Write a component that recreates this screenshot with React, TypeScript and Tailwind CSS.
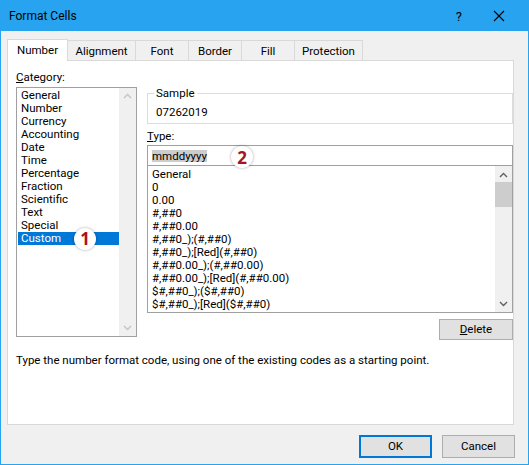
import React from "react";

const categories = [
  "General",
  "Number",
  "Currency",
  "Accounting",
  "Date",
  "Time",
  "Percentage",
  "Fraction",
  "Scientific",
  "Text",
  "Special",
  "Custom",
];

const formats = [
  "General",
  "0",
  "0.00",
  "#,##0",
  "#,##0.00",
  "#,##0_);(#,##0)",
  "#,##0_);[Red](#,##0)",
  "#,##0.00_);(#,##0.00)",
  "#,##0.00_);[Red](#,##0.00)",
  "$#,##0_);($#,##0)",
  "$#,##0_);[Red]($#,##0)",
];

const tabs = ["Alignment", "Font", "Border", "Fill", "Protection"];
const tabWidths = ["w-[69px]", "w-[54px]", "w-[54px]", "w-[54px]", "w-[69px]"];

const Chevron = ({ up, color }: { up?: boolean; color: string }) => (
  <svg width="9" height="6" viewBox="0 0 9 6">
    <path
      d={up ? "M1 5 L4.5 1.5 L8 5" : "M1 1 L4.5 4.5 L8 1"}
      fill="none"
      stroke={color}
      strokeWidth="1.4"
    />
  </svg>
);

const Badge = ({ n, className }: { n: string; className: string }) => (
  <div
    className={`absolute flex h-[22px] w-[22px] items-center justify-center rounded-full bg-white font-['Noto_Sans',sans-serif] text-[17px] font-bold leading-none text-[#a8141c] shadow-[0_0_3px_rgba(0,0,0,0.35)] ${className}`}
  >
    {n}
  </div>
);

const App: React.FC = () => {
  return (
    <div className="flex h-[465px] w-[529px] flex-col border border-[#27a3ef] bg-[#f0f0f0] font-['Roboto',sans-serif] text-[11.5px] leading-[13px] text-black">
      {/* Title bar */}
      <div className="flex h-[30px] shrink-0 items-center bg-[#27a3ef] pl-[8px]">
        <span className="text-[12px]">Format Cells</span>
        <span className="ml-auto mr-[31px] text-[13px]">?</span>
        <svg width="12" height="12" viewBox="0 0 12 12" className="mr-[23px]">
          <path d="M1 1 L11 11 M11 1 L1 11" stroke="#000" strokeWidth="1.1" />
        </svg>
      </div>

      {/* Tabs */}
      <div className="mt-[7px] flex h-[22px] items-end pl-[6px]">
        <div className="relative z-10 -mb-px flex h-[22px] w-[61px] items-start justify-center border border-b-0 border-[#d9d9d9] bg-white pt-[4px]">
          Number
        </div>
        {tabs.map((t, i) => (
          <div
            key={t}
            className={`-ml-px flex h-[20px] ${tabWidths[i]} items-start justify-center border border-b-0 border-[#d9d9d9] bg-[#f0f0f0] pt-[4px]`}
          >
            {t}
          </div>
        ))}
      </div>

      {/* Panel */}
      <div className="ml-[6px] flex h-[365px] w-[507px] flex-col border border-[#d9d9d9] bg-white pl-[8px] pt-[9px]">
        <div className="flex">
          {/* Category column */}
          <div className="flex w-[121px] flex-col">
            <div className="h-[15px] leading-[15px]">
              <span className="underline">C</span>ategory:
            </div>
            <div className="mt-[2px] flex h-[250px] border border-[#a0a0a0] bg-white">
              <div className="relative flex-1 pl-px pt-px">
                {categories.map((c) => (
                  <div
                    key={c}
                    className={`relative h-[13px] pl-[3px] ${
                      c === "Custom" ? "bg-[#0078d7] text-white" : ""
                    }`}
                  >
                    {c}
                    {c === "Custom" && <Badge n="1" className="left-[56px] top-[-4.5px]" />}
                  </div>
                ))}
              </div>
              <div className="flex w-[17px] flex-col items-center justify-between bg-[#f0f0f0] py-[5px]">
                <Chevron up color="#c5c5c5" />
                <Chevron color="#c5c5c5" />
              </div>
            </div>
          </div>

          {/* Right column */}
          <div className="ml-[10px] flex w-[366px] flex-col">
            <fieldset className="mt-[16px] border border-[#dcdcdc] pb-[4px] pl-[8px]">
              <legend className="-ml-[2px] px-[2px] leading-[14px]">Sample</legend>
              <div className="pt-[5px] leading-[14px]">07262019</div>
            </fieldset>

            <div className="mt-[5px] leading-[14px]">
              <span className="underline">T</span>ype:
            </div>
            <div className="relative mt-[2px] flex h-[21px] items-center border border-[#a0a0a0] pl-[4px]">
              <span className="bg-[#cccccc] leading-[12px]">mmddyyyy</span>
              <Badge n="2" className="left-[83px] top-0" />
            </div>
            <div className="-mt-px flex h-[148px] border border-[#a0a0a0] bg-white">
              <div className="flex-1 pl-[4px] pt-[2px]">
                {formats.map((f) => (
                  <div key={f} className="h-[13px] whitespace-nowrap">
                    {f}
                  </div>
                ))}
              </div>
              <div className="flex w-[17px] flex-col items-center bg-[#f0f0f0] pb-[5px] pt-[6px]">
                <Chevron up color="#606060" />
                <div className="mt-[4px] h-[25px] w-[17px] bg-[#cdcdcd]" />
                <div className="mt-auto">
                  <Chevron color="#606060" />
                </div>
              </div>
            </div>
            <div className="mt-[6px] flex justify-end">
              <button className="flex h-[21px] w-[74px] items-center justify-center border border-[#adadad] bg-[#e1e1e1]">
                <span className="underline">D</span>elete
              </button>
            </div>
          </div>
        </div>

        <div className="mt-[13px] leading-[14px]">
          Type the number format code, using one of the existing codes as a starting point.
        </div>
      </div>

      {/* Footer buttons */}
      <div className="mt-[10px] flex justify-end gap-[10px] pr-[13px]">
        <button className="flex h-[23px] w-[73px] items-center justify-center border-2 border-[#0078d7] bg-[#e1e1e1]">
          OK
        </button>
        <button className="flex h-[23px] w-[73px] items-center justify-center border border-[#adadad] bg-[#e1e1e1]">
          Cancel
        </button>
      </div>
    </div>
  );
};

export default App;
